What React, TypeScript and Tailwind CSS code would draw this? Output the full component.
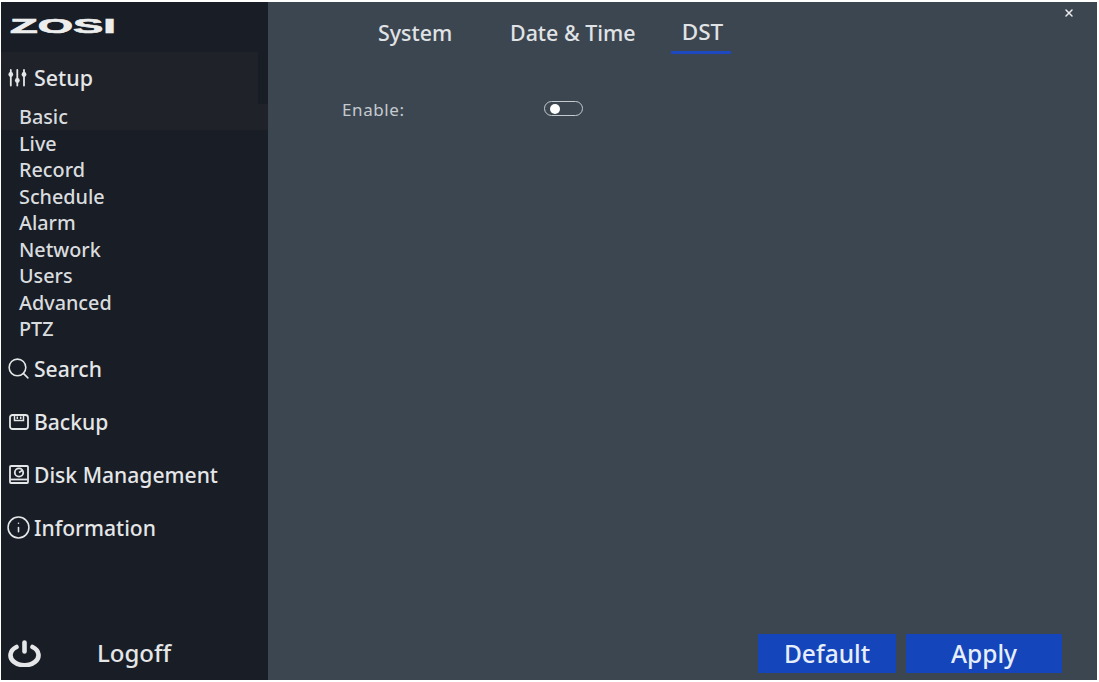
import React from "react";
import { Search, Info, X } from "lucide-react";

const SUB_ITEMS = ["Live", "Record", "Schedule", "Alarm", "Network", "Users", "Advanced", "PTZ"];

function SetupIcon() {
  return (
    <svg width="19" height="18" viewBox="0 0 19 18" fill="none" stroke="currentColor" strokeWidth="1.8" strokeLinecap="round">
      <path d="M2.8 1v15.5M9.3 1v15.5M16 1v15.5" />
      <circle cx="2.8" cy="5.5" r="2.4" fill="currentColor" stroke="none" />
      <circle cx="9.3" cy="11.5" r="2.4" fill="currentColor" stroke="none" />
      <circle cx="16" cy="5.5" r="2.4" fill="currentColor" stroke="none" />
    </svg>
  );
}

function BackupIcon() {
  return (
    <svg width="20" height="16" viewBox="0 0 20 16" fill="none" stroke="currentColor" strokeWidth="1.8">
      <rect x="1" y="1" width="18" height="14" rx="2.5" />
      <path d="M5.5 1.5v5h9v-5M8.3 2.5v2.5M11.7 2.5v2.5" strokeWidth="1.5" />
    </svg>
  );
}

function DiskIcon() {
  return (
    <svg width="20" height="19" viewBox="0 0 20 19" fill="none" stroke="currentColor" strokeWidth="1.8">
      <rect x="1" y="1" width="18" height="17" rx="1" />
      <circle cx="10" cy="7.5" r="4.2" />
      <path d="M10 7.5l3.2-2" strokeWidth="1.5" />
      <path d="M1.5 14.5h17" />
    </svg>
  );
}

function PowerIcon() {
  return (
    <svg width="33" height="27" viewBox="0 0 33 27" fill="none" stroke="currentColor" strokeWidth="4.6" strokeLinecap="round">
      <path d="M8.5 7a14 10 0 1 0 16 0" />
      <path d="M16.5 2.5v9" />
    </svg>
  );
}

function NavRow({ icon, label }: { icon: React.ReactNode; label: string }) {
  return (
    <div className="h-[53px] flex items-center pl-[5px] gap-[3px] text-[21.1px] font-medium text-[#e4e6e8]">
      <span className="w-[25px] flex justify-center shrink-0">{icon}</span>
      <span>{label}</span>
    </div>
  );
}

export default function App() {
  return (
    <div className="w-[1099px] h-[682px] bg-white pt-[2px] pb-[2px] pl-[1px] pr-[2px] font-['Noto_Sans',sans-serif] overflow-hidden">
      <div className="flex h-full">
        {/* sidebar */}
        <aside className="w-[267px] shrink-0 bg-[#191d25] flex flex-col">
          <div className="h-[50px] pl-[9px] pt-[8px] shrink-0">
            <svg width="112" height="32" viewBox="0 0 112 32">
              <text x="0" y="23" textLength="106" lengthAdjust="spacingAndGlyphs" fill="#eceded" stroke="#eceded" strokeWidth="0.7" fontSize="21" fontWeight="800" fontFamily="Liberation Sans, sans-serif">ZOSI</text>
            </svg>
          </div>

          <div className="w-[257px] h-[52px] bg-[#1f2329] flex items-center pl-[7px] gap-[7px] text-[21.4px] font-medium text-[#e4e6e8] shrink-0">
            <SetupIcon />
            <span>Setup</span>
          </div>
          <div className="h-[26px] bg-[#1f2329] pl-[18px] flex items-center text-[19.8px] font-medium text-[#d9dcdf] shrink-0">Basic</div>

          <div className="flex flex-col shrink-0 pt-[0.5px]">
            {SUB_ITEMS.map((item) => (
              <div key={item} className="h-[26.5px] pl-[18px] flex items-center text-[19.8px] font-medium text-[#d9dcdf]">{item}</div>
            ))}
          </div>

          <div className="flex flex-col shrink-0 -mt-[0.5px]">
            <NavRow icon={<Search size={25} strokeWidth={1.5} />} label="Search" />
            <NavRow icon={<BackupIcon />} label="Backup" />
            <NavRow icon={<DiskIcon />} label="Disk Management" />
            <NavRow icon={<Info size={25} strokeWidth={1.5} />} label="Information" />
          </div>

          <div className="mt-auto h-[54px] flex items-center pl-[7px] text-[24px] font-medium text-[#e4e6e8] shrink-0">
            <PowerIcon />
            <span className="ml-[56px]">Logoff</span>
          </div>
        </aside>

        {/* main panel */}
        <main className="flex-1 relative bg-[#3c4651] flex flex-col">
          <X size={12} strokeWidth={3} className="absolute right-[22px] top-[5px] text-[#e8eaec]" />

          <div className="flex h-[52px] shrink-0 pl-[110px] text-[21.4px] font-medium text-[#e0e3e6]">
            <div className="w-[132px] pt-[15px]">System</div>
            <div className="w-[161px] pt-[15px]">Date &amp; Time</div>
            <div className="w-[60px] h-[52px] pt-[13px] pl-[3px] text-center text-[22.5px] border-b-[3px] border-[#1e48c0]">DST</div>
          </div>

          <div className="flex items-center pl-[74px] mt-[45px] h-[22px] shrink-0">
            <span className="w-[202px] text-[17px] text-[#c5cace] tracking-[0.6px]">Enable:</span>
            <span className="w-[39px] h-[15px] -mt-[3px] rounded-full border-[1.5px] border-[#c4c9cd] flex items-center pl-[5px]">
              <span className="w-[10px] h-[10px] rounded-full bg-white" />
            </span>
          </div>

          <div className="mt-auto flex justify-end gap-[10px] pr-[35px] pb-[7px] shrink-0">
            <button className="w-[138px] h-[39px] pt-[2px] bg-[#1445bb] text-[24.5px] font-medium text-[#e6eefa] flex items-center justify-center">Default</button>
            <button className="w-[156px] h-[39px] pt-[2px] bg-[#1445bb] text-[24.5px] font-medium text-[#e6eefa] flex items-center justify-center">Apply</button>
          </div>
        </main>
      </div>
    </div>
  );
}
